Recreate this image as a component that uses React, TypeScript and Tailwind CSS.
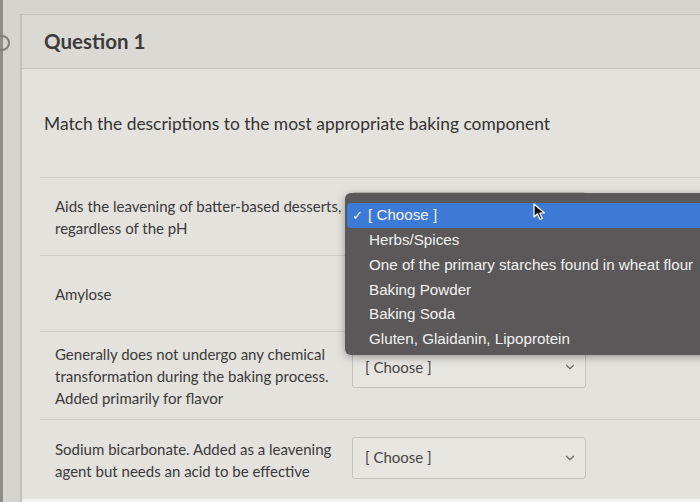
import { ChevronDown } from 'lucide-react';

interface Row {
  lines: string[];
  h: string;
  sel: string;
}

const rows: Row[] = [
  { lines: ['Aids the leavening of batter-based desserts,', 'regardless of the pH'], h: 'h-[78px]', sel: '-mt-[8px]' },
  { lines: ['Amylose'], h: 'h-[76px]', sel: '' },
  {
    lines: ['Generally does not undergo any chemical', 'transformation during the baking process.', 'Added primarily for flavor'],
    h: 'h-[88px]',
    sel: 'self-start mt-[14px]',
  },
  { lines: ['Sodium bicarbonate. Added as a leavening', 'agent but needs an acid to be effective'], h: 'h-[79px]', sel: '-mt-[4px]' },
];

const options = [
  'Herbs/Spices',
  'One of the primary starches found in wheat flour',
  'Baking Powder',
  'Baking Soda',
  'Gluten, Glaidanin, Lipoprotein',
];

function Select() {
  return (
    <div className="w-[234px] h-[42px] flex items-center justify-between pl-3 pr-2 border border-[#c4c2bd] rounded-[3px] bg-[#e7e5e0] text-[15px] text-[#454545]">
      <span>[ Choose ]</span>
      <ChevronDown size={14} strokeWidth={2} className="text-[#6a6a6a]" />
    </div>
  );
}

export default function App() {
  return (
    <div className="relative w-[700px] h-[502px] overflow-hidden bg-[#d6d4cf] flex font-['Lato',sans-serif]">
      {/* nav circle on the left edge */}
      <svg className="absolute left-[-6px] top-[33px]" width="20" height="20" viewBox="0 0 20 20">
        <circle cx="8" cy="10" r="7" fill="none" stroke="#7f7d7a" strokeWidth="2" />
      </svg>
      <div className="w-[3px] bg-[#8f8d8a]" />
      <div className="w-[17px]" />
      <div className="flex-1 mt-[14px] border-l-2 border-t border-[#c4c2bd] bg-[#e4e2dd] flex flex-col">
        <div className="h-[54px] shrink-0 bg-[#dbd9d4] border-b border-[#c4c2bd] flex items-center pl-[22px]">
          <h1 className="text-[20.5px] font-bold text-[#3b3b3b]">Question 1</h1>
        </div>
        <div className="flex-1 flex flex-col">
          <p className="mt-[42px] pl-[22px] text-[17.4px] text-[#333]">
            Match the descriptions to the most appropriate baking component
          </p>
          <div className="mt-[40px] ml-[18px] border-t border-[#cfcdc8]">
            {rows.map((row, i) => (
              <div
                key={i}
                className={`${row.h} flex items-center border-b border-[#cfcdc8] ${i === rows.length - 1 ? 'border-b-0' : ''}`}
              >
                <div className="w-[312px] shrink-0 pl-[15px] text-[15px] leading-[22px] text-[#3a3a3a] whitespace-nowrap">
                  {row.lines.map((l) => (
                    <div key={l}>{l}</div>
                  ))}
                </div>
                <div className={row.sel}>
                  <Select />
                </div>
              </div>
            ))}
          </div>
        </div>
        <div className="h-[5px] bg-[#f4f3f1]" />
      </div>

      {/* open native dropdown */}
      <div className="absolute left-[345px] top-[193px] w-[370px] h-[162px] rounded-[6px] bg-[#5a5858] shadow-[0_2px_8px_rgba(0,0,0,0.35)] pt-[10px] font-['Liberation_Sans',sans-serif] text-[15.2px] text-[#f2f2f2]">
        <div className="mx-[2px] h-[25px] flex items-center rounded-[4px] bg-[#3d7ad6]">
          <span className="w-[21px] pl-[5px] text-[13px]">✓</span>
          <span>[ Choose ]</span>
        </div>
        {options.map((o) => (
          <div key={o} className="h-[24.8px] flex items-center pl-[24px]">
            {o}
          </div>
        ))}
      </div>

      {/* mouse cursor */}
      <svg className="absolute left-[533px] top-[203px]" width="14" height="18" viewBox="0 0 14 18">
        <path d="M1 1 L1 14 L4.5 10.8 L7 16.5 L9.2 15.5 L6.8 10 L11.5 10 Z" fill="#111" stroke="#fff" strokeWidth="1.2" strokeLinejoin="round" />
      </svg>
    </div>
  );
}
